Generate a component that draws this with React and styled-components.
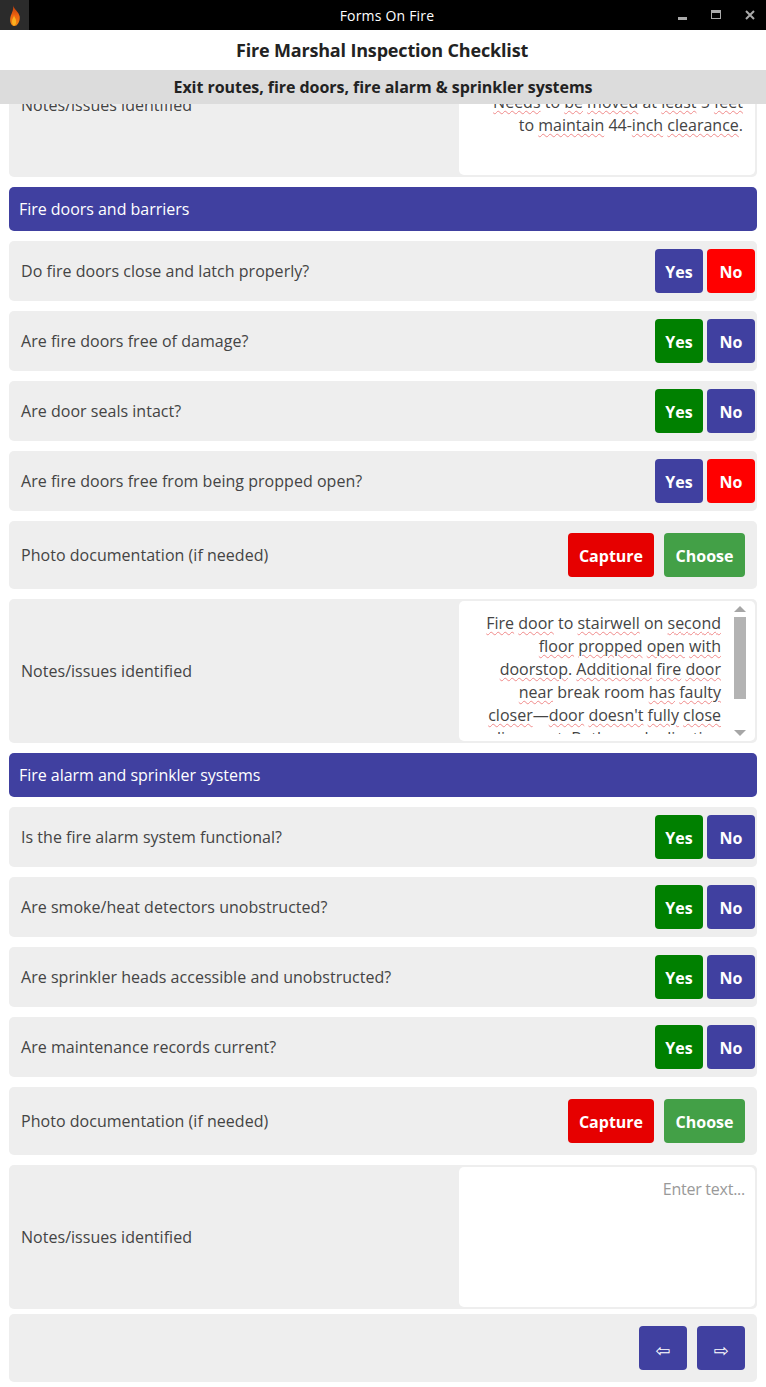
import styled, { createGlobalStyle } from "styled-components";

const Global = createGlobalStyle`
  html, body { margin: 0; padding: 0; height: 100%; background: #fff; overflow: hidden; }
  #root { height: 100%; }
  * { box-sizing: border-box; }
`;

const BLUE = "#4040a0";
const FONT = `"Open Sans", "Noto Sans", sans-serif`;

const Shell = styled.div`
  height: 1387px;
  display: flex;
  flex-direction: column;
  font-family: ${FONT};
  color: #444;
`;
const TitleBar = styled.div`
  height: 30px;
  flex: none;
  background: #000;
  display: flex;
  align-items: center;
`;
const AppIcon = styled.div`
  width: 29px;
  height: 30px;
  background: #2b2b2b;
  display: flex;
  align-items: center;
  justify-content: center;
`;
const AppName = styled.div`
  flex: 1;
  padding-left: 82px;
  text-align: center;
  color: #fff;
  font-size: 14px;
  letter-spacing: 0.2px;
`;
const WinControls = styled.div`
  display: flex;
  align-items: center;
  width: 103px;
  height: 30px;
`;
const Heading = styled.div`
  flex: none;
  height: 40px;
  background: #fff;
  color: #222;
  font-size: 18px;
  font-weight: 700;
  letter-spacing: -0.17px;
  padding-right: 2px;
  display: flex;
  align-items: center;
  justify-content: center;
`;
const SubHeading = styled.div`
  flex: none;
  height: 34px;
  background: #dcdcdc;
  color: #222;
  font-size: 16px;
  font-weight: 700;
  letter-spacing: -0.05px;
  display: flex;
  align-items: center;
  justify-content: center;
`;
const Scroller = styled.div`
  flex: 1;
  min-height: 0;
  overflow: hidden;
  display: flex;
  flex-direction: column;
  justify-content: flex-end;
  padding: 0 9px 5px;
`;
const Section = styled.div`
  flex: none;
  height: 44px;
  margin-top: 10px;
  background: ${BLUE};
  color: #fff;
  border-radius: 5px;
  padding: 0 10px;
  font-size: 16px;
  letter-spacing: -0.03px;
  display: flex;
  align-items: center;
`;
const Card = styled.div`
  flex: none;
  margin-top: ${(p) => p.$gap ?? 10}px;
  height: ${(p) => p.$height}px;
  background: #eee;
  border-radius: 5px;
  padding: ${(p) => p.$pad};
  display: flex;
  align-items: center;
  justify-content: ${(p) => p.$justify ?? "space-between"};
`;
const Label = styled.div`
  font-size: 16px;
  letter-spacing: 0.03px;
  color: #444;
`;
const Buttons = styled.div`
  display: flex;
  gap: ${(p) => p.$gap}px;
`;
const Btn = styled.button`
  border: 0;
  height: 44px;
  width: ${(p) => p.$width}px;
  padding: 1px 0 0;
  background: ${(p) => p.$bg};
  color: #fff;
  border-radius: 4px;
  font-family: ${FONT};
  font-size: 16px;
  font-weight: 700;
`;
const ArrowBtn = styled(Btn)`
  font-family: "DejaVu Sans", sans-serif;
  font-weight: 400;
  font-size: 18px;
  padding-top: 5px;
`;
const NoteBox = styled.div`
  width: 296px;
  height: 140px;
  background: #fff;
  border-radius: 5px;
  display: flex;
  overflow: hidden;
`;
const NoteText = styled.div`
  flex: 1;
  min-width: 0;
  height: ${(p) => p.$clip}px;
  overflow: hidden;
  padding: ${(p) => p.$pad};
  text-align: right;
  white-space: pre-line;
  font-size: 16px;
  line-height: 23px;
  letter-spacing: ${(p) => (p.$placeholder ? "-0.25px" : "0")};
  color: ${(p) => (p.$placeholder ? "#999" : "#444")};
`;
const Typo = styled.span`
  text-decoration: underline wavy #f08a8a 1px;
  text-underline-offset: 2px;
`;
const ScrollTrack = styled.div`
  flex: none;
  width: 21px;
  padding: 5px 9px 5px 0;
  display: flex;
  flex-direction: column;
  align-items: center;
`;
const ScrollThumb = styled.div`
  width: 12px;
  height: 82px;
  margin: 5px 0 auto;
  background: #b3b3b3;
`;
const ScrollArrow = styled.div`
  width: 0;
  height: 0;
  border-left: 6px solid transparent;
  border-right: 6px solid transparent;
  border-${(p) => (p.$down ? "top" : "bottom")}: 6px solid #a6a6a6;
`;

const flagged = new Set([
  "Needs", "be", "moved", "least", "feet", "maintain", "inch", "clearance",
  "Fire", "door", "stairwell", "second", "floor", "propped", "open", "with",
  "doorstop", "Additional", "fire", "near", "has", "faulty", "closer", "doesn't",
  "fully", "close",
]);

function Spelled({ text }) {
  return text.split(/([A-Za-z']+)/).map((part, i) =>
    flagged.has(part) ? <Typo key={i}>{part}</Typo> : part
  );
}

function Flame() {
  return (
    <svg width="10" height="21" viewBox="0 0 10 21">
      <defs>
        <linearGradient id="flame" x1="0" y1="0" x2="0" y2="1">
          <stop offset="0" stopColor="#b83a0c" />
          <stop offset="0.5" stopColor="#ee6210" />
          <stop offset="1" stopColor="#f08a14" />
        </linearGradient>
      </defs>
      <path d="M3 0c.5 4 6 7 6.700 11.500C10.200 16.500 7.500 21 4.500 21S-.2 17.500.2 13.500C.6 9 4 6 3 0z" fill="url(#flame)" />
      <path d="M4 10c.5 3 2.500 4 2.200 7-.2 2-1.200 3.500-2.200 3.500S1.800 18.500 2 16c.2-2.500 1.800-3.500 2-6z" fill="#fbb01f" />
    </svg>
  );
}

function WindowIcons() {
  return (
    <svg width="103" height="30" viewBox="0 0 103 30">
      <rect x="15" y="17" width="9" height="3" fill="#aaa" />
      <rect x="48.500" y="10.500" width="9" height="8" fill="none" stroke="#aaa" />
      <rect x="48" y="10" width="10" height="3" fill="#aaa" />
      <path d="M83 11l8 8M91 11l-8 8" stroke="#aaa" strokeWidth="2" fill="none" />
    </svg>
  );
}

function YesNo({ label, value }) {
  return (
    <Card $height={60} $pad="0 2px 0 12px">
      <Label>{label}</Label>
      <Buttons $gap={4}>
        <Btn $width={48} $bg={value === "yes" ? "#008000" : BLUE}>Yes</Btn>
        <Btn $width={48} $bg={value === "no" ? "#ff0000" : BLUE}>No</Btn>
      </Buttons>
    </Card>
  );
}

function Photo() {
  return (
    <Card $height={68} $pad="0 12px">
      <Label>Photo documentation (if needed)</Label>
      <Buttons $gap={10}>
        <Btn $width={86} $bg="#e60000">Capture</Btn>
        <Btn $width={81} $bg="#43a047">Choose</Btn>
      </Buttons>
    </Card>
  );
}

function Notes({ children }) {
  return (
    <Card $height={144} $pad="2px 2px 2px 12px">
      <Label>Notes/issues identified</Label>
      <NoteBox>{children}</NoteBox>
    </Card>
  );
}

const doorRows = [
  ["Do fire doors close and latch properly?", "no"],
  ["Are fire doors free of damage?", "yes"],
  ["Are door seals intact?", "yes"],
  ["Are fire doors free from being propped open?", "no"],
];
const alarmRows = [
  ["Is the fire alarm system functional?", "yes"],
  ["Are smoke/heat detectors unobstructed?", "yes"],
  ["Are sprinkler heads accessible and unobstructed?", "yes"],
  ["Are maintenance records current?", "yes"],
];

export default function App() {
  return (
    <Shell>
      <Global />
      <TitleBar>
        <AppIcon><Flame /></AppIcon>
        <AppName>Forms On Fire</AppName>
        <WinControls><WindowIcons /></WinControls>
      </TitleBar>
      <Heading>Fire Marshal Inspection Checklist</Heading>
      <SubHeading>Exit routes, fire doors, fire alarm &amp; sprinkler systems</SubHeading>
      <Scroller>
        <Notes>
          <NoteText $clip={140} $pad="10px 12px 0 10px">
            <Spelled text={"Storage boxes in the east exit\ncorridor are blocking the path.\nNeeds to be moved at least 5 feet\nto maintain 44-inch clearance."} />
          </NoteText>
        </Notes>
        <Section>Fire doors and barriers</Section>
        {doorRows.map(([label, value]) => <YesNo key={label} label={label} value={value} />)}
        <Photo />
        <Notes>
          <NoteText $clip={133} $pad="11px 13px 0 10px">
            <Spelled text={"Fire door to stairwell on second\nfloor propped open with\ndoorstop. Additional fire door\nnear break room has faulty\ncloser—door doesn't fully close\nalignment. Both need adjusting"} />
          </NoteText>
          <ScrollTrack>
            <ScrollArrow />
            <ScrollThumb />
            <ScrollArrow $down />
          </ScrollTrack>
        </Notes>
        <Section>Fire alarm and sprinkler systems</Section>
        {alarmRows.map(([label, value]) => <YesNo key={label} label={label} value={value} />)}
        <Photo />
        <Notes>
          <NoteText $clip={140} $pad="11px 10px 0" $placeholder>Enter text...</NoteText>
        </Notes>
        <Card $height={68} $pad="0 12px" $gap={5} $justify="flex-end">
          <Buttons $gap={10}>
            <ArrowBtn $width={48} $bg={BLUE}>⇦</ArrowBtn>
            <ArrowBtn $width={48} $bg={BLUE}>⇨</ArrowBtn>
          </Buttons>
        </Card>
      </Scroller>
    </Shell>
  );
}
